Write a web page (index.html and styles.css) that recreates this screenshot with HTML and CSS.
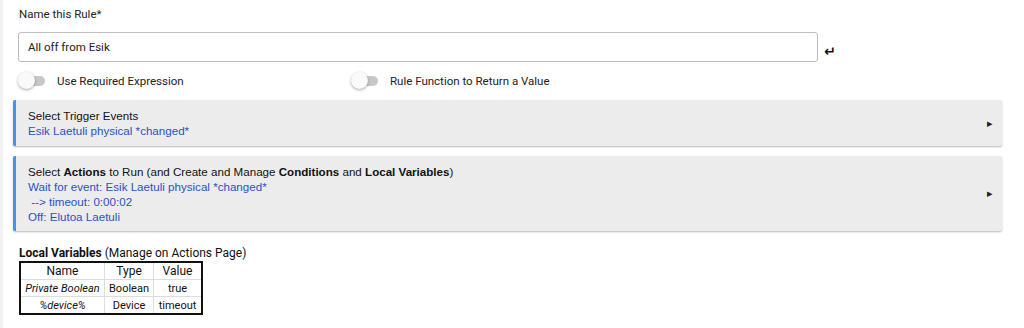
FILE: index.html
```html
<!DOCTYPE html>
<html>
<head>
<meta charset="utf-8">
<link rel="stylesheet" href="styles.css">
</head>
<body>
<div class="page">
  <div class="name-block">
    <div class="label">Name this Rule*</div>
    <div class="input-row">
      <div class="input">All off from Esik</div>
      <span class="enter">&#8629;</span>
    </div>
  </div>
  <div class="toggles">
    <div class="toggle-item t1"><span class="switch"><span class="knob"></span></span><span class="tlabel">Use Required Expression</span></div>
    <div class="toggle-item"><span class="switch"><span class="knob"></span></span><span class="tlabel">Rule Function to Return a Value</span></div>
  </div>
  <div class="card c1">
    <div class="card-text">
      <div class="title">Select Trigger Events</div>
      <div class="blue">Esik Laetuli physical *changed*</div>
    </div>
    <span class="arrow">&#9656;</span>
  </div>
  <div class="card c2">
    <div class="card-text">
      <div class="title">Select <b>Actions</b> to Run (and Create and Manage <b>Conditions</b> and <b>Local Variables</b>)</div>
      <div class="blue">Wait for event: Esik Laetuli physical *changed*</div>
      <div class="blue">&nbsp;--&gt; timeout: 0:00:02</div>
      <div class="blue">Off: Elutoa Laetuli</div>
    </div>
    <span class="arrow">&#9656;</span>
  </div>
  <div class="locals">
    <div class="lv-title"><b>Local Variables</b> (Manage on Actions Page)</div>
    <table class="vars">
      <tr><th class="cn">Name</th><th class="ct">Type</th><th class="cv">Value</th></tr>
      <tr><td><i>Private Boolean</i></td><td>Boolean</td><td>true</td></tr>
      <tr><td><i>%device%</i></td><td>Device</td><td>timeout</td></tr>
    </table>
  </div>
</div>
</body>
</html>
```
FILE: styles.css
```css
html, body { margin: 0; padding: 0; background: #fff; }
body { width: 1024px; height: 328px; overflow: hidden; font-family: Roboto, "Liberation Sans", sans-serif; color: #222; }
.page { border-left: 3px solid #f2f2f2; height: 328px; box-sizing: border-box; padding: 6px 0 0 10px; }
.name-block { padding-left: 6px; }
.label { font-size: 11.5px; line-height: 16px; color: #222; }
.input-row { display: flex; align-items: center; margin-top: 10px; }
.input { height: 28px; border: 1px solid #bdbdbd; border-radius: 3px; box-sizing: content-box; font-size: 11.5px; line-height: 28px; padding-left: 9px; margin-left: -1px; color: #222; width: 789px; }
.enter { font-family: "DejaVu Sans", sans-serif; font-size: 14px; margin-left: 6px; margin-top: 7px; color: #111; font-weight: bold; }
.toggles { display: flex; padding-left: 6px; margin-top: 9px; height: 20px; align-items: center; }
.toggle-item { display: flex; align-items: center; }
.t1 { width: 333px; }
.switch { position: relative; width: 26px; height: 10px; background: #c8c8c8; border-radius: 5px; display: inline-block; margin-right: 12px; }
.knob { position: absolute; left: -1px; top: -4px; width: 17px; height: 17px; border-radius: 50%; background: #fafafa; box-shadow: 0 1px 3px rgba(0,0,0,0.35); }
.tlabel { font-size: 11.5px; color: #222; }
.card { width: 989px; background: #ececec; border-left: 3px solid #4a8ef0; border-radius: 2px; box-shadow: 0 1px 2px rgba(0,0,0,0.28); display: flex; align-items: center; box-sizing: border-box; padding: 8px 12px 8px 12px; font-family: "Liberation Sans", Arial, sans-serif; font-size: 11.6px; line-height: 15px; }
.c1 { margin-top: 9px; height: 46px; }
.c2 { margin-top: 10px; height: 75px; }
.card-text { flex: 1; }
.title { color: #111; }
.blue { color: #2b4fc9; }
.arrow { font-size: 11px; color: #222; margin-right: -3px; }
.locals { margin-top: 15px; padding-left: 6px; }
.lv-title { font-size: 12px; line-height: 14px; color: #111; }
.lv-title b { font-weight: bold; }
.vars { border-collapse: collapse; border: 2px solid #111; margin-top: 1px; font-size: 11px; }
.vars th, .vars td { border: 1px solid #ddd; text-align: center; padding: 0 2px; height: 16px; line-height: 15px; color: #111; }
.vars th { font-weight: normal; font-size: 12px; }
.cn { width: 79px; }
.ct { width: 44px; }
.cv { width: 43px; }
```
